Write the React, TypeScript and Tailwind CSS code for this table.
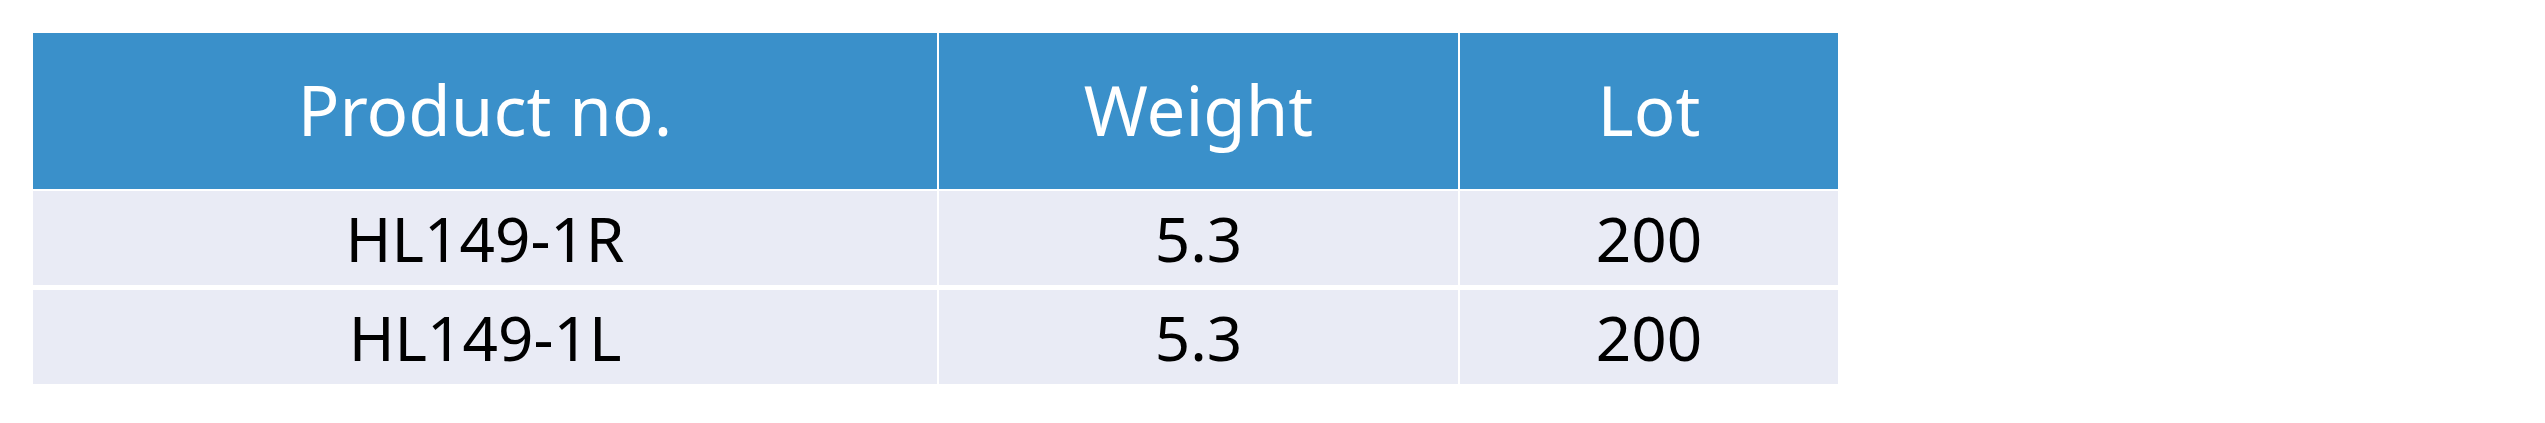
import React from "react";

interface ProductRow {
  productNumber: string;
  weight: string;
  lot: string;
}

const productRows: ProductRow[] = [
  { productNumber: "HL149-1R", weight: "5.3", lot: "200" },
  { productNumber: "HL149-1L", weight: "5.3", lot: "200" },
];

const columnGrid = "grid grid-cols-[904px_519px_378px] gap-x-[2px]";

export default function App() {
  return (
    <div
      className="h-[423px] w-[2545px] bg-white pl-[33px] pt-[33px]"
      style={{ fontFamily: '"Noto Sans", "Open Sans", sans-serif' }}
    >
      <div className="flex w-[1805px] flex-col">
        {/* Header */}
        <div className={`${columnGrid} h-[156px]`}>
          {["Product no.", "Weight", "Lot"].map((headingText) => (
            <div
              key={headingText}
              className="flex items-center justify-center bg-[#3a90ca] text-[69px] leading-none text-white"
            >
              <span className="pb-[4px]">{headingText}</span>
            </div>
          ))}
        </div>

        {/* Body rows */}
        {productRows.map((productRow, rowIndex) => (
          <div
            key={productRow.productNumber}
            className={`${columnGrid} h-[94px] ${rowIndex === 0 ? "mt-[2px]" : "mt-[5px]"}`}
          >
            {[productRow.productNumber, productRow.weight, productRow.lot].map(
              (cellText, cellIndex) => (
                <div
                  key={cellIndex}
                  className="flex items-center justify-center bg-[#e9ebf5] text-[62px] leading-none text-black"
                >
                  {cellText}
                </div>
              ),
            )}
          </div>
        ))}
      </div>
    </div>
  );
}
